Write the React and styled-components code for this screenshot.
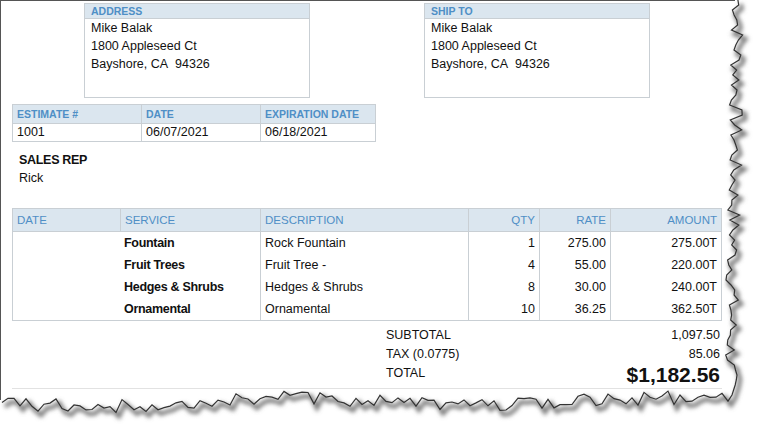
import React from "react";
import styled, { createGlobalStyle } from "styled-components";

const GlobalStyle = createGlobalStyle`
  html, body { margin: 0; padding: 0; background: #fff; }
  body { font-family: "Liberation Sans", Arial, sans-serif; color: #111; }
`;

const items = [
  { service: "Fountain", desc: "Rock Fountain", qty: "1", rate: "275.00", amount: "275.00T" },
  { service: "Fruit Trees", desc: "Fruit Tree -", qty: "4", rate: "55.00", amount: "220.00T" },
  { service: "Hedges & Shrubs", desc: "Hedges & Shrubs", qty: "8", rate: "30.00", amount: "240.00T" },
  { service: "Ornamental", desc: "Ornamental", qty: "10", rate: "36.25", amount: "362.50T" },
];

// deterministic jagged torn edge
const rand = (() => {
  let s = 7;
  return () => {
    s = (s * 9301 + 49297) % 233280;
    return s / 233280;
  };
})();

const buildEdge = () => {
  const pts = [];
  for (let y = 0; y <= 395; y += 5) {
    const base = 738 - (y / 395) * 8;
    pts.push([base + (rand() - 0.5) * 14, y]);
  }
  for (let x = 728; x >= 0; x -= 6) {
    const base = 402 + Math.sin(x / 60) * 4;
    pts.push([x, base + (rand() - 0.5) * 14]);
  }
  return pts;
};
const edge = buildEdge();
const edgeLine = edge.map((p, i) => `${i ? "L" : "M"}${p[0].toFixed(1)} ${p[1].toFixed(1)}`).join(" ");
const outside = `${edgeLine} L0 439 L768 439 L768 0 Z`;

const Page = styled.div`
  position: relative;
  width: 768px;
  height: 439px;
  overflow: hidden;
`;

const Paper = styled.div`
  width: 735px;
  height: 400px;
  border-left: 1px solid #555;
  border-top: 1px solid #555;
  box-sizing: border-box;
  padding: 2px 0 0 11px;
  display: flex;
  flex-direction: column;
`;

const TopRow = styled.div`
  display: flex;
  gap: 114px;
  padding-left: 72px;
`;

const Box = styled.div`
  width: 226px;
  height: 95px;
  border: 1px solid #c9cfd4;
  box-sizing: border-box;
`;

const HeadBar = styled.div`
  background: #dbe6ef;
  color: #4f8fc6;
  font-size: 10.5px;
  font-weight: bold;
  height: 14px;
  line-height: 14px;
  padding-left: 6px;
  border-bottom: 1px solid #c9cfd4;
`;

const Lines = styled.div`
  padding: 0 6px;
  font-size: 12.5px;
  line-height: 18px;
`;

const Grid = styled.div`
  display: grid;
  grid-template-columns: ${(p) => p.cols};
  width: ${(p) => p.w}px;
  border: 1px solid #c9cfd4;
  box-sizing: border-box;
  margin-top: ${(p) => p.mt || 0}px;
`;

const Th = styled.div`
  background: #dbe6ef;
  color: #4f8fc6;
  font-size: ${(p) => (p.small ? 10.5 : 11.5)}px;
  font-weight: ${(p) => (p.small ? "bold" : "normal")};
  height: ${(p) => p.h}px;
  line-height: ${(p) => p.h}px;
  padding: 0 4px;
  text-align: ${(p) => (p.right ? "right" : "left")};
  border-left: ${(p) => (p.first ? "none" : "1px solid #c9cfd4")};
  border-bottom: 1px solid #c9cfd4;
`;

const Td = styled.div`
  font-size: 12.5px;
  font-weight: ${(p) => (p.bold ? "bold" : "normal")};
  letter-spacing: ${(p) => (p.bold ? "-0.3px" : "0")};
  height: ${(p) => p.h}px;
  line-height: ${(p) => p.h}px;
  padding: 0 4px;
  text-align: ${(p) => (p.right ? "right" : "left")};
  border-left: ${(p) => (p.noline ? "none" : "1px solid #c9cfd4")};
`;

const Rep = styled.div`
  margin: 9px 0 0 7px;
  font-size: 12.5px;
  line-height: 18px;
`;

const RepTitle = styled.div`
  font-weight: bold;
  letter-spacing: -0.3px;
`;

const Totals = styled.div`
  display: grid;
  grid-template-columns: 1fr auto;
  width: 334px;
  margin: 5px 0 0 374px;
  font-size: 12.5px;
  row-gap: 1px;
  line-height: 18px;
`;

const Val = styled.div`
  text-align: right;
  font-size: ${(p) => (p.big ? 21 : 12.5)}px;
  font-weight: ${(p) => (p.big ? "bold" : "normal")};
  line-height: ${(p) => (p.big ? "22px" : "18px")};
`;

const Rule = styled.div`
  width: 710px;
  border-top: 1px solid #e2e2e2;
  margin-top: 2px;
`;

const Edge = styled.svg`
  position: absolute;
  left: 0;
  top: 0;
  pointer-events: none;
`;

const mainCols = "107px 140px 208px 71px 71px 1fr";

export default function App() {
  return (
    <Page>
      <GlobalStyle />
      <Paper>
        <TopRow>
          {["ADDRESS", "SHIP TO"].map((h) => (
            <Box key={h}>
              <HeadBar>{h}</HeadBar>
              <Lines>
                <div>Mike Balak</div>
                <div>1800 Appleseed Ct</div>
                <div>Bayshore, CA&nbsp; 94326</div>
              </Lines>
            </Box>
          ))}
        </TopRow>

        <Grid cols="128px 119px 1fr" w={364} mt={6}>
          <Th small first h={18}>ESTIMATE #</Th>
          <Th small h={18}>DATE</Th>
          <Th small h={18}>EXPIRATION DATE</Th>
          <Td noline h={17}>1001</Td>
          <Td h={17}>06/07/2021</Td>
          <Td h={17}>06/18/2021</Td>
        </Grid>

        <Rep>
          <RepTitle>SALES REP</RepTitle>
          <div>Rick</div>
        </Rep>

        <Grid cols={mainCols} w={710} mt={21}>
          <Th first h={22}>DATE</Th>
          <Th h={22}>SERVICE</Th>
          <Th h={22}>DESCRIPTION</Th>
          <Th right h={22}>QTY</Th>
          <Th right h={22}>RATE</Th>
          <Th right h={22}>AMOUNT</Th>
          {items.map((it) => (
            <React.Fragment key={it.service}>
              <Td noline h={22}></Td>
              <Td noline bold h={22}>{it.service}</Td>
              <Td h={22}>{it.desc}</Td>
              <Td right h={22}>{it.qty}</Td>
              <Td right h={22}>{it.rate}</Td>
              <Td right h={22}>{it.amount}</Td>
            </React.Fragment>
          ))}
        </Grid>

        <Totals>
          <div>SUBTOTAL</div>
          <Val>1,097.50</Val>
          <div>TAX (0.0775)</div>
          <Val>85.06</Val>
          <div>TOTAL</div>
          <Val big>$1,182.56</Val>
        </Totals>
        <Rule />
      </Paper>

      <Edge width="768" height="439" viewBox="0 0 768 439">
        <defs>
          <filter id="blur" x="-10%" y="-10%" width="120%" height="120%">
            <feGaussianBlur stdDeviation="2" />
          </filter>
        </defs>
        <path d={outside} fill="#fff" />
        <path d={edgeLine} fill="none" stroke="#777" strokeWidth="4" filter="url(#blur)" transform="translate(3 4)" />
        <path d={edgeLine} fill="none" stroke="#333" strokeWidth="1.2" />
      </Edge>
    </Page>
  );
}
